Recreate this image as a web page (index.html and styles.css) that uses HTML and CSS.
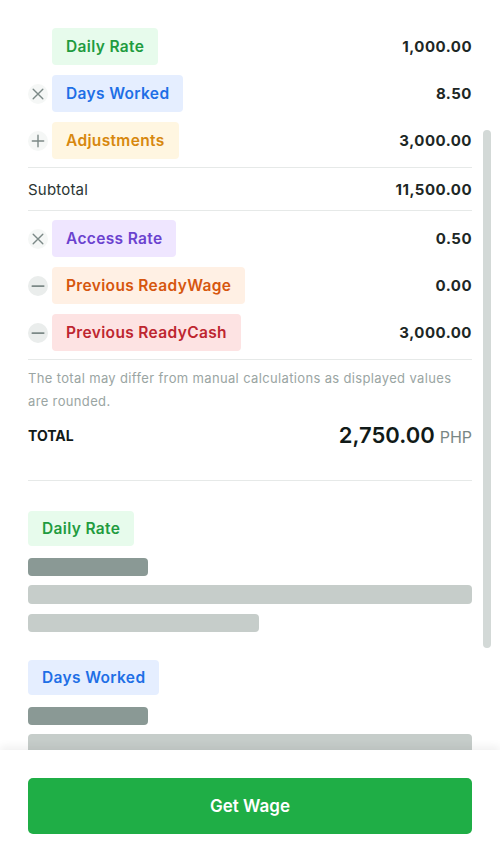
FILE: index.html
```html
<!DOCTYPE html>
<html lang="en">
<head>
<meta charset="utf-8">
<title>Wage breakdown</title>
<link rel="stylesheet" href="styles.css">
</head>
<body>
<div class="page">
  <main class="scroll">
    <div class="content">
      <section class="rows">
        <div class="row">
          <div class="row-left"><span class="op"></span><span class="chip chip-green">Daily Rate</span></div>
          <span class="amount">1,000.00</span>
        </div>
        <div class="row">
          <div class="row-left"><span class="op op-x"><svg viewBox="0 0 16 16" width="16" height="16"><path d="M2.5 2.5 L13.5 13.5 M13.5 2.5 L2.5 13.5" /></svg></span><span class="chip chip-blue">Days Worked</span></div>
          <span class="amount">8.50</span>
        </div>
        <div class="row">
          <div class="row-left"><span class="op op-x"><svg viewBox="0 0 16 16" width="16" height="16"><path d="M8 1.5 V14.5 M1.5 8 H14.5" /></svg></span><span class="chip chip-amber">Adjustments</span></div>
          <span class="amount">3,000.00</span>
        </div>
      </section>
      <hr class="divider divider-a">
      <div class="subtotal">
        <span class="subtotal-label">Subtotal</span>
        <span class="amount">11,500.00</span>
      </div>
      <hr class="divider">
      <section class="rows rows-b">
        <div class="row">
          <div class="row-left"><span class="op op-x"><svg viewBox="0 0 16 16" width="16" height="16"><path d="M2.5 2.5 L13.5 13.5 M13.5 2.5 L2.5 13.5" /></svg></span><span class="chip chip-purple">Access Rate</span></div>
          <span class="amount">0.50</span>
        </div>
        <div class="row">
          <div class="row-left"><span class="op op-minus"><svg viewBox="0 0 16 16" width="16" height="16"><path d="M1.5 8 H14.5" /></svg></span><span class="chip chip-orange">Previous ReadyWage</span></div>
          <span class="amount">0.00</span>
        </div>
        <div class="row">
          <div class="row-left"><span class="op op-minus"><svg viewBox="0 0 16 16" width="16" height="16"><path d="M1.5 8 H14.5" /></svg></span><span class="chip chip-red">Previous ReadyCash</span></div>
          <span class="amount">3,000.00</span>
        </div>
      </section>
      <hr class="divider divider-c">
      <p class="note">The total may differ from manual calculations as displayed values are rounded.</p>
      <div class="total">
        <span class="total-label">TOTAL</span>
        <span class="total-value"><span class="total-num">2,750.00</span> <span class="total-cur">PHP</span></span>
      </div>
      <hr class="divider divider-d">

      <section class="skel">
        <span class="chip chip-green chip-skel">Daily Rate</span>
        <div class="bar bar-dark"></div>
        <div class="bar bar-light bar-full"></div>
        <div class="bar bar-light bar-half"></div>
      </section>
      <section class="skel skel-2">
        <span class="chip chip-blue chip-skel">Days Worked</span>
        <div class="bar bar-dark"></div>
        <div class="bar bar-light bar-full"></div>
        <div class="bar bar-light bar-half"></div>
      </section>
    </div>
    <div class="scrollbar"></div>
  </main>
  <footer class="footer">
    <button class="btn" type="button">Get Wage</button>
  </footer>
</div>
</body>
</html>
```

FILE: styles.css
```css
* { box-sizing: border-box; }
html, body { margin: 0; padding: 0; }
body {
  font-family: Inter, "Noto Sans", sans-serif;
  color: #1d2725;
  background: #fff;
}
.page {
  height: 862px;
  display: flex;
  flex-direction: column;
}
.scroll {
  position: relative;
  flex: 1;
  overflow: hidden;
}
.content {
  padding: 28px 28px 0;
}
.rows {
  display: flex;
  flex-direction: column;
  gap: 10px;
}
.rows-b { margin-top: 9px; }
.row {
  height: 37px;
  display: flex;
  align-items: center;
  justify-content: space-between;
}
.row-left {
  display: flex;
  align-items: center;
}
.op {
  width: 20px;
  height: 20px;
  margin-right: 4px;
  border-radius: 50%;
  display: flex;
  align-items: center;
  justify-content: center;
}
.op svg {
  width: 14px;
  height: 14px;
  fill: none;
  stroke: #7c8987;
  stroke-width: 1.6;
  stroke-linecap: round;
}
.op-x { background: #f5f7f6; }
.op-minus { background: #eaedec; }
.op-minus svg { stroke-width: 2; }
.chip {
  display: inline-flex;
  align-items: center;
  height: 37px;
  padding: 0 14px 0 14px;
  border-radius: 4px;
  font-size: 15.5px;
  font-weight: 600;
  letter-spacing: 0.35px;
}
.chip-green { background: #e7fbec; color: #1f9b3f; }
.chip-blue { background: #e5eeff; color: #1e6fe6; }
.chip-amber { background: #fff6e1; color: #d7880f; }
.chip-purple { background: #efe6ff; color: #6b42cf; }
.chip-orange { background: #fff0e4; color: #d6560f; }
.chip-red { background: #fde3e3; color: #be2630; }
.amount {
  font-size: 15px;
  font-weight: 700;
  letter-spacing: 0.5px;
  color: #1d2725;
}
.divider {
  border: 0;
  border-top: 1px solid #e6e9e8;
  margin: 0;
}
.divider-a { margin-top: 8px; }
.divider-c { margin-top: 8px; }
.subtotal {
  height: 42px;
  display: flex;
  align-items: center;
  justify-content: space-between;
}
.subtotal-label {
  font-size: 15px;
  color: #2b3533;
  letter-spacing: 0.2px;
}
.note {
  margin: 7px 0 0;
  font-size: 13px;
  line-height: 23px;
  color: #9aa5a3;
  letter-spacing: 0.35px;
}
.total {
  height: 44px;
  display: flex;
  align-items: center;
  justify-content: space-between;
}
.total-label {
  font-size: 14px;
  font-weight: 700;
  color: #111a18;
}
.total-value {
  display: flex;
  align-items: baseline;
  gap: 5px;
}
.total-num {
  font-size: 22px;
  font-weight: 600;
  color: #111a18;
}
.total-cur {
  font-size: 16px;
  color: #7a8785;
}
.divider-d { margin-top: 23px; }
.skel {
  padding-top: 30px;
  display: flex;
  flex-direction: column;
  align-items: flex-start;
}
.skel-2 { padding-top: 28px; }
.chip-skel { height: 35px; }
.bar {
  border-radius: 4px;
}
.bar-dark {
  margin-top: 12px;
  width: 120px;
  height: 18px;
  background: #8a9995;
}
.bar-light { background: #c6cdca; height: 19px; }
.bar-full { margin-top: 9px; width: 100%; }
.bar-half { margin-top: 10px; width: 231px; height: 18px; }
.scrollbar {
  position: absolute;
  left: 483px;
  top: 130px;
  width: 8px;
  height: 518px;
  border-radius: 4px;
  background: #d3d9d7;
}
.footer {
  height: 112px;
  padding: 28px 28px;
  background: #fff;
  box-shadow: 0 -4px 8px rgba(0, 0, 0, 0.06);
  position: relative;
}
.btn {
  width: 100%;
  height: 56px;
  border: 0;
  border-radius: 5px;
  background: #1fae46;
  color: #fff;
  font-family: Inter, "Noto Sans", sans-serif;
  font-size: 17px;
  font-weight: 600;
}
```
